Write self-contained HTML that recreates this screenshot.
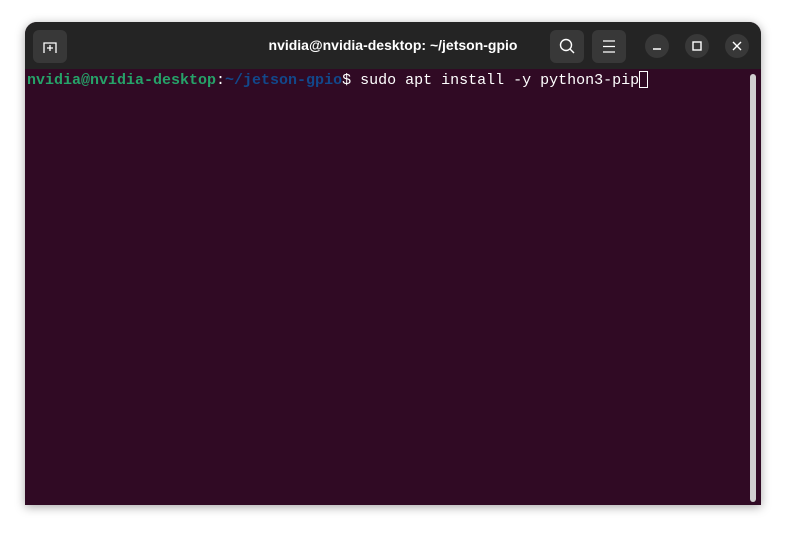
<!DOCTYPE html><html><head><style>
body{margin:0;width:786px;height:533px;background:#fff;position:relative;overflow:hidden;font-family:"Liberation Sans",sans-serif}
.win{position:absolute;left:25px;top:22px;width:736px;height:483px;border-radius:12px 12px 0 0;overflow:hidden;background:#300a24;box-shadow:0 2px 10px rgba(0,0,0,.35)}
.hdr{position:absolute;left:0;top:0;width:100%;height:47px;background:#242424}
.btn{position:absolute;top:8px;width:34px;height:33px;border-radius:6px;background:#383838}
.c{position:absolute;top:12px;width:24px;height:24px;border-radius:50%;background:#383838}
.title{position:absolute;left:0;width:100%;top:15px;text-align:center;color:#fff;font-weight:bold;font-size:14px;padding-left:0;box-sizing:border-box}
.t{position:absolute;left:2px;top:49px;font-family:"Liberation Mono",monospace;font-size:15px;color:#fff;white-space:pre;line-height:18px}
.sb{position:absolute;left:725px;top:52px;width:6px;height:428px;border-radius:3px;background:#cfcfcf}
</style></head><body>
<div class="win">
<div class="hdr">
<div class="btn" style="left:8px"><svg width="34" height="33"><path d="M11 23V13h12v10M14 18h6M17 15v6" stroke="#fff" stroke-width="1.3" fill="none"/></svg></div>
<div class="title">nvidia@nvidia-desktop: ~/jetson-gpio</div>
<div class="btn" style="left:525px"><svg width="34" height="33"><circle cx="16" cy="15" r="5.5" stroke="#fff" stroke-width="1.4" fill="none"/><path d="M20 19l4 4" stroke="#fff" stroke-width="1.4"/></svg></div>
<div class="btn" style="left:567px"><svg width="34" height="33"><path d="M11 11h12M11 16.5h12M11 22h12" stroke="#fff" stroke-width="1.2"/></svg></div>
<div class="c" style="left:620px"><svg width="24" height="24"><path d="M8 15h8" stroke="#fff" stroke-width="1.4"/></svg></div>
<div class="c" style="left:660px"><svg width="24" height="24"><rect x="8" y="8" width="8" height="8" stroke="#fff" stroke-width="1.4" fill="none"/></svg></div>
<div class="c" style="left:700px"><svg width="24" height="24"><path d="M8 8l8 8M16 8l-8 8" stroke="#fff" stroke-width="1.4"/></svg></div>
</div>
<div class="t"><b style="color:#26a269">nvidia@nvidia-desktop</b>:<b style="color:#12488b">~/jetson-gpio</b>$ sudo apt install -y python3-pip<span style="display:inline-block;width:9px;height:17px;border:1px solid #fff;box-sizing:border-box;vertical-align:-4px"></span></div>
<div class="sb"></div>
</div>
</body></html>
